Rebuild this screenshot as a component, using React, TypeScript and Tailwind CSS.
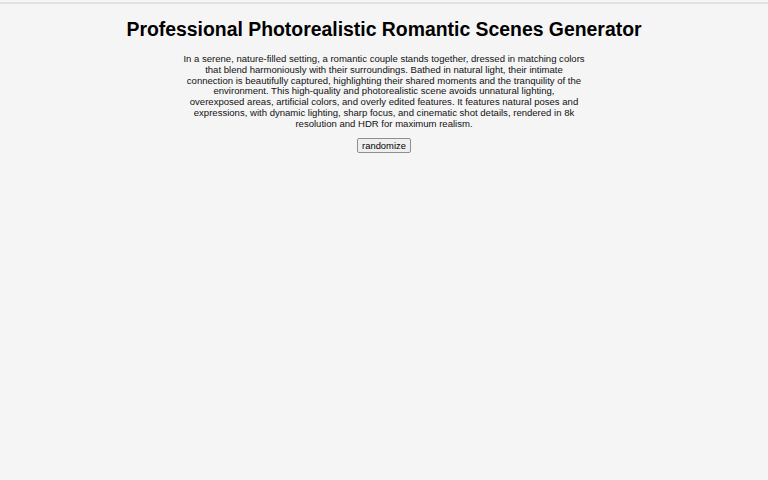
const lines = [
  'In a serene, nature-filled setting, a romantic couple stands together, dressed in matching colors',
  'that blend harmoniously with their surroundings. Bathed in natural light, their intimate',
  'connection is beautifully captured, highlighting their shared moments and the tranquility of the',
  'environment. This high-quality and photorealistic scene avoids unnatural lighting,',
  'overexposed areas, artificial colors, and overly edited features. It features natural poses and',
  'expressions, with dynamic lighting, sharp focus, and cinematic shot details, rendered in 8k',
  'resolution and HDR for maximum realism.',
];

export default function App() {
  return (
    <div className="min-h-[480px] bg-[#f5f5f5] font-['Liberation_Sans',Arial,sans-serif] text-black">
      <div className="h-[4px] border-b-2 border-[#e2e2e2]" />
      <div className="flex flex-col items-center px-4">
        <h1 className="mt-[12px] text-[19.4px] font-bold leading-[26px]">
          Professional Photorealistic Romantic Scenes Generator
        </h1>
        <p className="mt-[12px] max-w-[440px] text-center text-[9.55px] leading-[10.83px] text-[#111]">
          {lines.map((line, i) => (
            <span key={i} className="block whitespace-nowrap">
              {line}
            </span>
          ))}
        </p>
        <button className="mt-[8px] h-[15px] rounded-[2px] border border-[#8f8f8f] bg-[#efefef] px-[4px] text-[9.4px] leading-[13px] text-black">
          randomize
        </button>
      </div>
    </div>
  );
}
